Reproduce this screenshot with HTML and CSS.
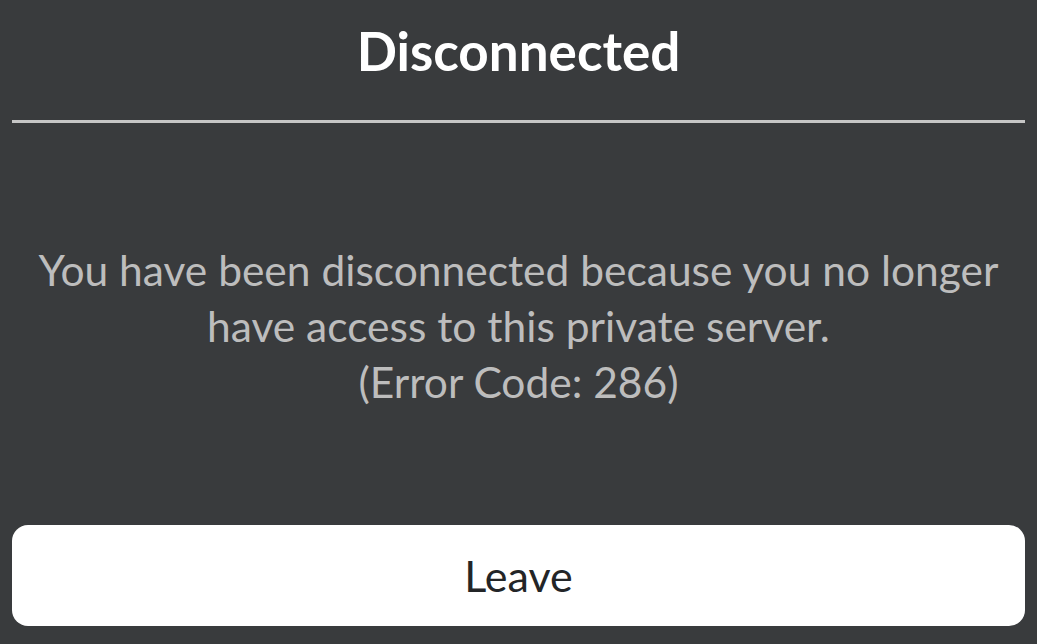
FILE: index.html
```html
<!DOCTYPE html>
<html>
<head>
<meta charset="utf-8">
<link rel="stylesheet" href="styles.css">
</head>
<body>
<div class="dialog">
  <div class="header"><h1 class="title">Disconnected</h1></div>
  <div class="divider"></div>
  <div class="message">
    <p>You have been disconnected because you no longer have access to this private server.<br>(Error Code: 286)</p>
  </div>
  <div class="actions"><button class="leave">Leave</button></div>
</div>
</body>
</html>
```
FILE: styles.css
```css
html, body {
  margin: 0;
  padding: 0;
  height: 100%;
  background: #393b3d;
}
.dialog {
  height: 644px;
  display: flex;
  flex-direction: column;
  padding: 0 12px;
  box-sizing: border-box;
  font-family: "Lato", "Noto Sans", sans-serif;
}
.header {
  height: 120px;
  box-sizing: border-box;
  padding-bottom: 20px;
  display: flex;
  align-items: center;
  justify-content: center;
}
.title {
  margin: 0;
  color: #ffffff;
  font-size: 53px;
  font-weight: 700;
}
.divider {
  height: 3px;
  background: #c6c6c6;
}
.message {
  flex: 1;
  display: flex;
  align-items: center;
  justify-content: center;
}
.message p {
  margin: 0;
  text-align: center;
  color: #bdbdbd;
  font-size: 42.5px;
  line-height: 56px;
  padding: 4px 20px 0;
}
.actions {
  padding-bottom: 18px;
}
.leave {
  width: 100%;
  height: 101px;
  border: none;
  border-radius: 16px;
  background: #ffffff;
  color: #232527;
  font-family: inherit;
  font-size: 43px;
}
```
